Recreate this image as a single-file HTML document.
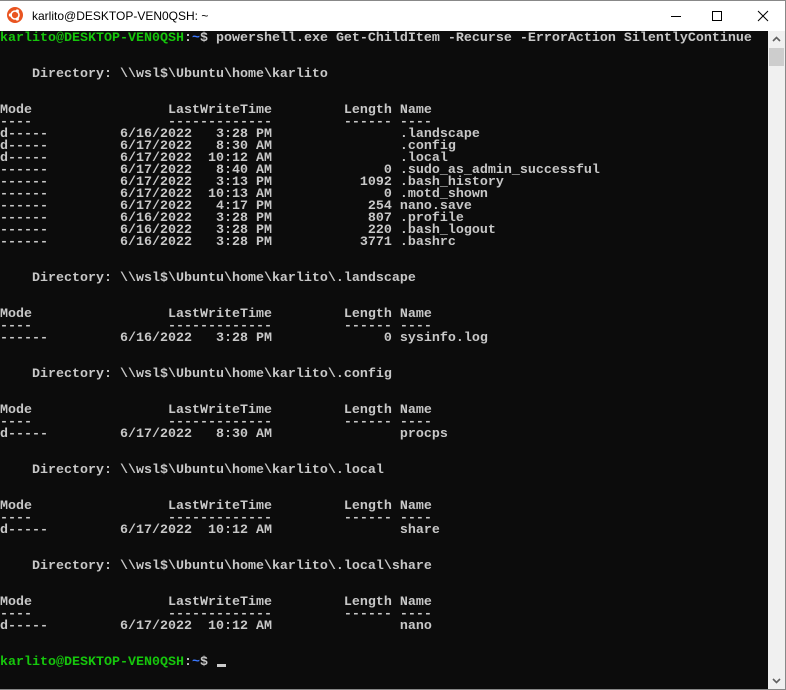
<!DOCTYPE html>
<html><head><meta charset="utf-8"><style>
html,body{margin:0;padding:0;}
body{width:786px;height:690px;position:relative;overflow:hidden;background:#fff;font-family:"Liberation Sans",sans-serif;}
#tb{position:absolute;left:0;top:0;width:786px;height:31px;background:#fff;border-top:1px solid #888;box-sizing:border-box;}
#title{position:absolute;left:32px;top:8px;font-size:12px;color:#000;}
#term{position:absolute;left:0;top:31px;width:768px;height:658px;background:#0c0c0c;}
pre{margin:0;font-family:"Liberation Mono",monospace;font-size:13.33px;line-height:12px;color:#c8c8c8;font-weight:bold;position:absolute;left:0;top:2px;white-space:pre;}
.g{color:#16c60c;}.b{color:#3b78ff;}
#sb{position:absolute;left:768px;top:31px;width:17px;height:658px;background:#f0f0f0;}
#thumb{position:absolute;left:1px;top:17px;width:15px;height:18px;background:#cdcdcd;}
#rb{position:absolute;right:0;top:0;width:1px;height:690px;background:#888;}
#bb{position:absolute;left:0;bottom:0;width:786px;height:1px;background:#888;}
#cur{position:absolute;left:217px;top:664px;width:9px;height:3px;background:#ccc;}
</style></head><body>
<div id="tb">
<svg style="position:absolute;left:7px;top:6px" width="16" height="16" viewBox="0 0 16 16"><circle cx="8" cy="8" r="8" fill="#e95420"/><circle cx="8" cy="8" r="4" fill="none" stroke="#fff" stroke-width="1.6"/><circle cx="3.4" cy="8" r="1.6" fill="#fff"/><circle cx="10.3" cy="4" r="1.6" fill="#fff"/><circle cx="10.3" cy="12" r="1.6" fill="#fff"/></svg>
<div id="title">karlito@DESKTOP-VEN0QSH: ~</div>
<svg style="position:absolute;left:660px;top:8px" width="120" height="14" viewBox="0 0 120 14"><line x1="11" y1="7.5" x2="21" y2="7.5" stroke="#000" stroke-width="1"/><rect x="52.5" y="2.5" width="9" height="9" fill="none" stroke="#000"/><path d="M98 2L108 12M108 2L98 12" stroke="#000" stroke-width="1"/></svg>
</div>
<div id="term"><pre><span class="g">karlito@DESKTOP-VEN0QSH</span>:<span class="b">~</span>$ powershell.exe Get-ChildItem -Recurse -ErrorAction SilentlyContinue


    Directory: \\wsl$\Ubuntu\home\karlito


Mode                 LastWriteTime         Length Name
----                 -------------         ------ ----
d-----         6/16/2022   3:28 PM                .landscape
d-----         6/17/2022   8:30 AM                .config
d-----         6/17/2022  10:12 AM                .local
------         6/17/2022   8:40 AM              0 .sudo_as_admin_successful
------         6/17/2022   3:13 PM           1092 .bash_history
------         6/17/2022  10:13 AM              0 .motd_shown
------         6/17/2022   4:17 PM            254 nano.save
------         6/16/2022   3:28 PM            807 .profile
------         6/16/2022   3:28 PM            220 .bash_logout
------         6/16/2022   3:28 PM           3771 .bashrc


    Directory: \\wsl$\Ubuntu\home\karlito\.landscape


Mode                 LastWriteTime         Length Name
----                 -------------         ------ ----
------         6/16/2022   3:28 PM              0 sysinfo.log


    Directory: \\wsl$\Ubuntu\home\karlito\.config


Mode                 LastWriteTime         Length Name
----                 -------------         ------ ----
d-----         6/17/2022   8:30 AM                procps


    Directory: \\wsl$\Ubuntu\home\karlito\.local


Mode                 LastWriteTime         Length Name
----                 -------------         ------ ----
d-----         6/17/2022  10:12 AM                share


    Directory: \\wsl$\Ubuntu\home\karlito\.local\share


Mode                 LastWriteTime         Length Name
----                 -------------         ------ ----
d-----         6/17/2022  10:12 AM                nano


<span class="g">karlito@DESKTOP-VEN0QSH</span>:<span class="b">~</span>$ </pre></div>
<div id="cur"></div>
<div id="sb"><div id="thumb"></div>
<svg style="position:absolute;left:4px;top:5px" width="9" height="6" viewBox="0 0 9 6"><path d="M1 5L4.5 1.5L8 5" stroke="#606060" stroke-width="1.6" fill="none"/></svg>
<svg style="position:absolute;left:4px;top:647px" width="9" height="6" viewBox="0 0 9 6"><path d="M1 1L4.5 4.5L8 1" stroke="#606060" stroke-width="1.6" fill="none"/></svg>
</div>
<div id="rb"></div><div id="bb"></div>
</body></html>
